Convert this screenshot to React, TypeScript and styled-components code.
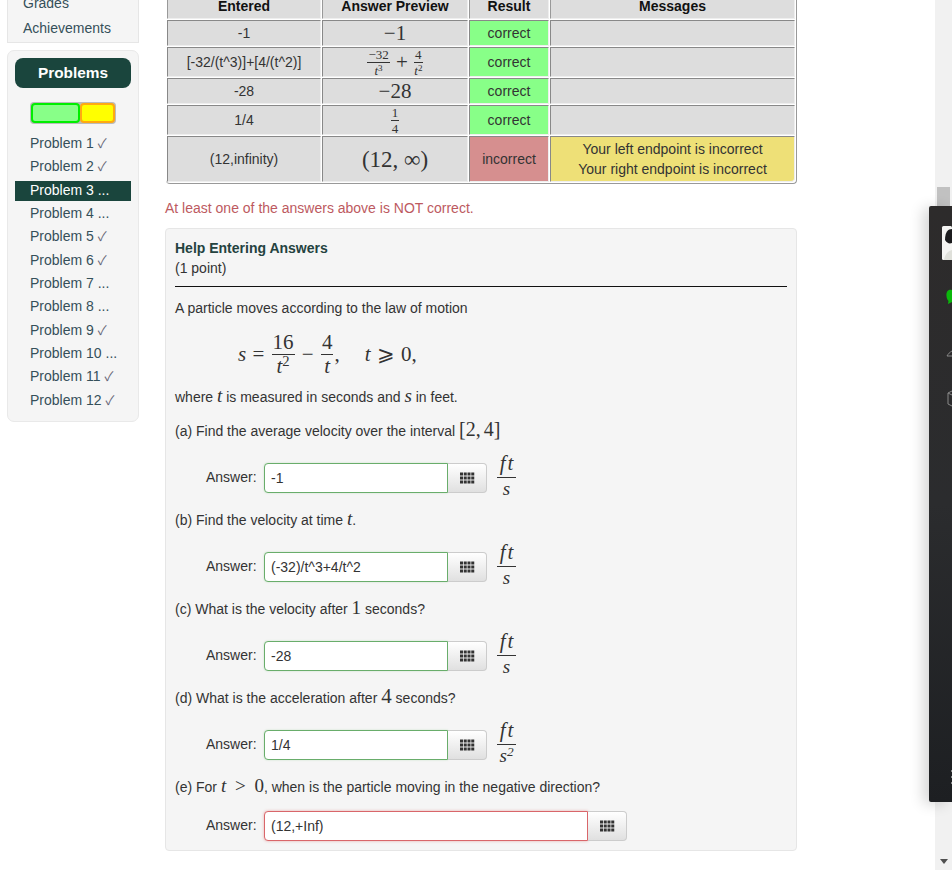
import React from "react";
import styled, { createGlobalStyle } from "styled-components";

const Global = createGlobalStyle`
  html, body { margin: 0; padding: 0; background: #fff; overflow: hidden; }
  body { font-family: "Liberation Sans", Arial, sans-serif; font-size: 14px; color: #333; }
`;

const Page = styled.div`
  display: flex; width: 952px; height: 870px; overflow: hidden; position: relative;
`;
const Sidebar = styled.aside`
  width: 132px; margin: -30px 26px 0 7px; flex: none; display: flex; flex-direction: column; gap: 7px;
`;
const NavPanel = styled.nav`
  box-sizing: border-box; height: 73px; background: #f5f5f5; border: 1px solid #e6e6e6; padding: 0 15px;
  display: flex; flex-direction: column; justify-content: flex-end;
`;
const NavLink = styled.a`
  color: #35505a; font-size: 14px; height: 25px; line-height: 25px; white-space: nowrap;
  &:last-child { margin-bottom: 1px; }
`;
const ProblemsPanel = styled.div`
  box-sizing: border-box; height: 372px; background: #f5f5f5; border: 1px solid #e9e9e9; border-radius: 7px; padding: 7px;
  display: flex; flex-direction: column;
`;
const ProblemsHead = styled.div`
  height: 30px; flex: none; border-radius: 8px; background: #1a453d; color: #fff; font-weight: 700; font-size: 15.4px;
  display: flex; align-items: center; justify-content: center;
`;
const StatusBar = styled.div`
  box-sizing: border-box; display: flex; width: 86px; height: 22px; margin: 14px 0 9px 15px; background: #bbb; border-radius: 4px; padding: 1px;
`;
const StatusPart = styled.div<{ $w: number; $bg: string; $bd: string }>`
  box-sizing: border-box; width: ${p => p.$w}px; height: 20px; background: ${p => p.$bg}; border: 2px solid ${p => p.$bd}; border-radius: 4px;
`;
const ProblemLink = styled.div<{ $active?: boolean }>`
  height: 23.33px; line-height: 21px; flex: none; padding-left: 15px; font-size: 14px; white-space: nowrap;
  color: ${p => (p.$active ? "#fff" : "#35505a")};
  ${p => (p.$active ? "background:#1a453d; height:20px; line-height:19px; margin:1px 0 2.33px;" : "")}
`;
const Tick = styled.span`
  font-family: "Noto Sans CJK SC", "DejaVu Sans", sans-serif; font-size: 13px; line-height: 0; color: #667;
`;

const Main = styled.main`
  width: 632px; flex: none; margin-top: -12px;
`;
const Results = styled.table`
  box-sizing: border-box; width: 631px; margin-left: 1px; table-layout: fixed; border-collapse: separate; border-spacing: 1px;
  border-right: 1px solid #999; border-bottom: 1px solid #999; border-radius: 0 0 4px 4px; font-size: 14px;
`;
const Th = styled.th<{ $w: number }>`
  box-sizing: border-box; width: ${p => p.$w}px; height: 30px; padding: 4px 0 0; background: #ddd; color: #111; font-size: 14px; font-weight: 700;
  border: 1px solid; border-color: #ccc #eee #eee #999;
`;
const Td = styled.td<{ $bg?: string; $h: number; $corner?: boolean }>`
  box-sizing: border-box; height: ${p => p.$h}px; padding: 0; text-align: center; vertical-align: middle; background: ${p => p.$bg || "#ddd"}; color: #333;
  border: 1px solid; border-color: #888 #eee #eee #888; line-height: 20px;
  ${p => (p.$corner ? "border-radius: 0 0 4px 0;" : "")}
`;
const Preview = styled.div<{ $size?: number }>`
  font-family: "Liberation Serif", serif; font-size: ${p => p.$size || 21}px; color: #333; display: flex; height: 20px; align-items: center; justify-content: center; line-height: 1;
`;
const Frac = styled.span<{ $size: number; $gap?: number }>`
  display: inline-flex; flex-direction: column; align-items: center; vertical-align: middle; font-family: "Liberation Serif", serif; font-size: ${p => p.$size}px; line-height: 1; color: #333;
  margin: 0 ${p => p.$gap ?? 1}px;
`;
const FracTop = styled.span`
  padding: 0 1px 1px; border-bottom: 1px solid #333; align-self: stretch; text-align: center;
`;
const FracBottom = styled.span`
  padding-top: 1px; text-align: center;
`;
const Sup = styled.sup`
  font-size: 0.7em; line-height: 0; vertical-align: 0.45em;
`;
const V = styled.i`
  font-family: "Liberation Serif", serif;
`;
const ErrorLine = styled.p`
  color: #bd5a5f; margin: 16px 0 11px; line-height: 17px; font-size: 14px;
`;
const Problem = styled.section`
  box-sizing: border-box; height: 623px; background: #f5f5f5; border: 1px solid #e6e6e6; border-radius: 4px; padding: 9px;
  color: #333; line-height: 20px;
`;
const Title = styled.div`
  font-weight: 700; color: #24423f;
`;
const Rule = styled.hr`
  border: 0; border-top: 1px solid #111; margin: 8px 0 11px;
`;
const Text = styled.p<{ $top?: number }>`
  margin: ${p => p.$top ?? 0}px 0 0; height: 20px; line-height: 20px; white-space: nowrap;
`;
const Inline = styled.span<{ $size?: number; $space?: number }>`
  font-family: "Liberation Serif", serif; font-size: ${p => p.$size || 19}px; line-height: 0; color: #333;
  word-spacing: ${p => p.$space ?? 0}px;
`;
const Display = styled.div`
  display: flex; align-items: center; height: 50px; margin: 11px 0 8px 63px; font-family: "Liberation Serif", serif; font-size: 21px; white-space: pre; word-spacing: 1px;
`;
const AnswerRow = styled.div<{ $top?: number }>`
  display: flex; align-items: center; height: 30px; margin: ${p => p.$top ?? 22}px 0 0 31px;
`;
const AnswerLabel = styled.span`
  width: 58px; flex: none; padding-bottom: 2px;
`;
const Input = styled.div<{ $w: number; $bad?: boolean }>`
  box-sizing: border-box; width: ${p => p.$w}px; height: 30px; line-height: 28px; padding-left: 6px; background: #fff; border-radius: 4px 0 0 4px;
  border: 1px solid ${p => (p.$bad ? "#d9666a" : "#69ad6b")}; color: #333;
  box-shadow: ${p => (p.$bad ? "0 0 3px rgba(217,83,79,.45)" : "0 0 2px rgba(92,184,92,.3)")};
`;
const GridButton = styled.button`
  box-sizing: border-box; width: 39px; height: 30px; padding: 0; border: 1px solid #ccc; border-left: 0; border-radius: 0 4px 4px 0;
  background: linear-gradient(#fff, #e0e0e0); display: flex; align-items: center; justify-content: center;
`;
const Unit = styled.span`
  display: inline-flex; flex-direction: column; align-items: center; width: 19px; margin-left: 10px; margin-top: -5px;
  font-family: "Liberation Serif", serif; font-size: 21px; line-height: 1; color: #333;
`;
const UnitTop = styled.span`
  align-self: stretch; text-align: center; border-bottom: 1px solid #333; padding-bottom: 3px; white-space: nowrap; letter-spacing: 2px; text-indent: 2px; font-style: italic;
`;
const UnitBottom = styled.span`
  padding-top: 1px; font-style: italic; font-size: 19px;
`;

const Scrollbar = styled.div`
  position: absolute; right: 0; top: 0; bottom: 0; width: 17px; background: #f1f1f1;
`;
const Thumb = styled.div`
  position: absolute; left: 2px; right: 2px; top: 187px; height: 100px; background: #c1c1c1;
`;
const Arrow = styled.div`
  position: absolute; left: 5px; bottom: 6px; width: 0; height: 0; border-left: 4px solid transparent; border-right: 4px solid transparent; border-top: 5px solid #505050;
`;
const Float = styled.div`
  position: absolute; left: 929px; top: 206px; width: 23px; height: 596px; overflow: hidden; border-radius: 2px 0 0 2px;
  background: linear-gradient(180deg, #2d2b2b 0%, #2b2c2e 50%, #1d1f22 100%); box-shadow: -6px 2px 14px rgba(0,0,0,.16);
`;

const GridIcon = () => (
  <svg width="15" height="12" viewBox="0 0 15 12" aria-hidden>
    {[0, 4, 8].flatMap(y => [0, 3.75, 7.5, 11.25].map(x => <rect key={`${x}-${y}`} x={x} y={y + 0.5} width="3" height="3" fill="#333" />))}
  </svg>
);
const FloatArt = () => (
  <svg width="23" height="596" viewBox="0 0 23 596" aria-hidden>
    <rect x="13" y="20" width="10" height="34" rx="1.5" fill="#f4f4f2" />
    <path d="M16 34c0-8 3-11 7-11v14c-3 1-5 0-7-3z" fill="#1c1c1e" />
    <path d="M15 54c1-6 4-9 8-10v10z" fill="#dfe0da" />
    <path d="M23 84c-4-1-6 2-5.500 6 0 2 1 4 2 5l-.5 3 4-2z" fill="#0bb70b" />
    <path d="M18 150c1-2 3-4 5-5M18 150h5" stroke="#888" fill="none" strokeWidth="1" />
    <path d="M19 187l4-2M19 187v11l4 2M19 187l4 2" stroke="#888" fill="none" strokeWidth="1" />
    <path d="M22 565h1M22 571h1M22 577h1" stroke="#aaa" strokeWidth="1.500" />
  </svg>
);

const solved = [true, true, false, false, true, true, false, false, true, false, true, true];

const Answer = ({ value, top, unit, wide, bad }: { value: string; top?: number; unit?: React.ReactNode; wide?: boolean; bad?: boolean }) => (
  <AnswerRow $top={top}>
    <AnswerLabel>Answer:</AnswerLabel>
    <Input $w={wide ? 324 : 184} $bad={bad}>{value}</Input>
    <GridButton aria-label="Equation editor"><GridIcon /></GridButton>
    {unit}
  </AnswerRow>
);
const FtS = ({ square }: { square?: boolean }) => (
  <Unit>
    <UnitTop>ft</UnitTop>
    <UnitBottom>s{square && <Sup>2</Sup>}</UnitBottom>
  </Unit>
);

export default function App() {
  return (
    <Page>
      <Global />
      <Sidebar>
        <NavPanel>
          <NavLink>Grades</NavLink>
          <NavLink>Achievements</NavLink>
        </NavPanel>
        <ProblemsPanel>
          <ProblemsHead>Problems</ProblemsHead>
          <StatusBar>
            <StatusPart $w={49} $bg="#88ff88" $bd="#00ee00" />
            <StatusPart $w={35} $bg="#ffff00" $bd="#ffaa11" />
          </StatusBar>
          {solved.map((done, i) => (
            <ProblemLink key={i} $active={i === 2}>
              Problem {i + 1} {done ? <Tick>✓</Tick> : "..."}
            </ProblemLink>
          ))}
        </ProblemsPanel>
      </Sidebar>
      <Main>
        <Results>
          <thead>
            <tr>
              <Th $w={154}>Entered</Th>
              <Th $w={146}>Answer Preview</Th>
              <Th $w={80}>Result</Th>
              <Th $w={245}>Messages</Th>
            </tr>
          </thead>
          <tbody>
            <tr>
              <Td $h={26}>-1</Td>
              <Td $h={26}><Preview>−1</Preview></Td>
              <Td $h={26} $bg="#88ff88">correct</Td>
              <Td $h={26} />
            </tr>
            <tr>
              <Td $h={30}>[-32/(t^3)]+[4/(t^2)]</Td>
              <Td $h={30}>
                <Preview>
                  <Frac $size={13}><FracTop>−32</FracTop><FracBottom><V>t</V><Sup>3</Sup></FracBottom></Frac>
                  &nbsp;+&nbsp;
                  <Frac $size={13}><FracTop>4</FracTop><FracBottom><V>t</V><Sup>2</Sup></FracBottom></Frac>
                </Preview>
              </Td>
              <Td $h={30} $bg="#88ff88">correct</Td>
              <Td $h={30} />
            </tr>
            <tr>
              <Td $h={26}>-28</Td>
              <Td $h={26}><Preview>−28</Preview></Td>
              <Td $h={26} $bg="#88ff88">correct</Td>
              <Td $h={26} />
            </tr>
            <tr>
              <Td $h={30}>1/4</Td>
              <Td $h={30}>
                <Preview><Frac $size={13}><FracTop>1</FracTop><FracBottom>4</FracBottom></Frac></Preview>
              </Td>
              <Td $h={30} $bg="#88ff88">correct</Td>
              <Td $h={30} />
            </tr>
            <tr>
              <Td $h={46}>(12,infinity)</Td>
              <Td $h={46}><Preview $size={23}>(12, ∞)</Preview></Td>
              <Td $h={46} $bg="#d68f8f">incorrect</Td>
              <Td $h={46} $bg="#eee077" $corner>Your left endpoint is incorrect<br />Your right endpoint is incorrect</Td>
            </tr>
          </tbody>
        </Results>
        <ErrorLine>At least one of the answers above is NOT correct.</ErrorLine>
        <Problem>
          <Title>Help Entering Answers</Title>
          <div>(1 point)</div>
          <Rule />
          <Text>A particle moves according to the law of motion</Text>
          <Display>
            <V>s</V> = <Frac $size={21} $gap={1}><FracTop>16</FracTop><FracBottom><V>t</V><Sup>2</Sup></FracBottom></Frac> − <Frac $size={21} $gap={1}><FracTop>4</FracTop><FracBottom><V>t</V></FracBottom></Frac>,{"    "}<V>t</V> ⩾ 0,
          </Display>
          <Text>where <Inline><V>t</V></Inline> is measured in seconds and <Inline><V>s</V></Inline> in feet.</Text>
          <Text $top={14}>(a) Find the average velocity over the interval <Inline $size={20} $space={-2}>[2, 4]</Inline></Text>
          <Answer value="-1" unit={<FtS />} />
          <Text $top={17}>(b) Find the velocity at time <Inline><V>t</V></Inline>.</Text>
          <Answer value="(-32)/t^3+4/t^2" unit={<FtS />} />
          <Text $top={17}>(c) What is the velocity after <Inline>1</Inline> seconds?</Text>
          <Answer value="-28" unit={<FtS />} />
          <Text $top={17}>(d) What is the acceleration after <Inline $size={21}>4</Inline> seconds?</Text>
          <Answer value="1/4" unit={<FtS square />} />
          <Text $top={17}>(e) For <Inline $space={4}><V>t</V> &gt; 0</Inline>, when is the particle moving in the negative direction?</Text>
          <Answer value="(12,+Inf)" wide bad top={14} />
        </Problem>
      </Main>
      <Scrollbar>
        <Thumb />
        <Arrow />
      </Scrollbar>
      <Float><FloatArt /></Float>
    </Page>
  );
}
